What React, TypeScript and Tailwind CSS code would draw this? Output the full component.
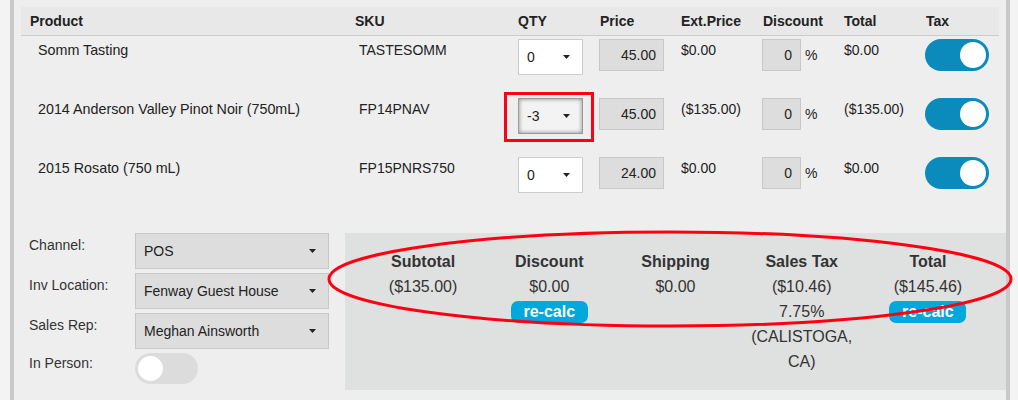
import React from 'react';

interface Line {
  name: string;
  sku: string;
  qty: string;
  price: string;
  ext: string;
  discount: string;
  total: string;
  focused?: boolean;
}

const lines: Line[] = [
  { name: 'Somm Tasting', sku: 'TASTESOMM', qty: '0', price: '45.00', ext: '$0.00', discount: '0', total: '$0.00' },
  { name: '2014 Anderson Valley Pinot Noir (750mL)', sku: 'FP14PNAV', qty: '-3', price: '45.00', ext: '($135.00)', discount: '0', total: '($135.00)', focused: true },
  { name: '2015 Rosato (750 mL)', sku: 'FP15PNRS750', qty: '0', price: '24.00', ext: '$0.00', discount: '0', total: '$0.00' },
];

const cols = 'grid grid-cols-[324px_163px_82px_81px_82px_81px_82px_83px]';

function Caret() {
  return (
    <svg width="7" height="4" viewBox="0 0 7 4" className="shrink-0">
      <path d="M0 0 L7 0 L3.5 4 Z" fill="#222" />
    </svg>
  );
}

function Toggle({ on }: { on: boolean }) {
  return (
    <div
      className={
        on
          ? 'w-[64px] h-[32px] rounded-full bg-[#0a8bbc] flex items-center justify-end px-[3px]'
          : 'w-[63px] h-[31px] rounded-full bg-[#dcdcdc] flex items-center justify-start px-[3px]'
      }
    >
      <div className={on ? 'w-[26px] h-[26px] rounded-full bg-white' : 'w-[25px] h-[25px] rounded-full bg-white'} />
    </div>
  );
}

function FormSelect({ value }: { value: string }) {
  return (
    <div className="w-[194px] h-[36px] bg-[#dddddd] border border-[#c8c8c8] flex items-center justify-between pl-[8px] pr-[12px] text-[14px] text-[#222]">
      <span>{value}</span>
      <Caret />
    </div>
  );
}

export default function App() {
  const summary = [
    { label: 'Subtotal', value: '($135.00)' },
    { label: 'Discount', value: '$0.00', recalc: true },
    { label: 'Shipping', value: '$0.00' },
    { label: 'Sales Tax', value: '($10.46)', extra: ['7.75%', '(CALISTOGA,', 'CA)'] },
    { label: 'Total', value: '($145.46)', recalc: true },
  ];

  return (
    <div className="relative w-[1018px] h-[400px] overflow-hidden bg-[#f3f3f3] pl-[10px] font-['Liberation_Sans',Arial,sans-serif] text-[#222]">
      <div className="w-[1000px] h-full border-l-4 border-r-4 border-[#c9c9c9] bg-[#eeeeee] pt-[7px]">
        {/* line items */}
        <div className="mx-[7px]">
          <div className={`${cols} h-[29px] bg-[#e8e8e8] border-b border-[#cccccc] items-center text-[14px] font-bold`}>
            <div className="pl-[9px]">Product</div>
            <div className="pl-[10px]">SKU</div>
            <div className="pl-[10px]">QTY</div>
            <div className="pl-[10px]">Price</div>
            <div className="pl-[10px]">Ext.Price</div>
            <div className="pl-[10px]">Discount</div>
            <div className="pl-[10px]">Total</div>
            <div className="pl-[10px]">Tax</div>
          </div>
          {lines.map((l) => (
            <div key={l.sku} className={`${cols} h-[59px] items-start pt-[3px] text-[14px] leading-[20px]`}>
              <div className="pl-[17px] pt-[1px] text-[14.3px]">{l.name}</div>
              <div className="pl-[14px] pt-[1px]">{l.sku}</div>
              <div className="pl-[10px] relative">
                <div
                  className={
                    l.focused
                      ? 'w-[65px] h-[36px] bg-[#f3f3f3] border border-[#9a9a9a] shadow-[inset_0_0_4px_rgba(0,0,0,0.45)] flex items-center justify-between pl-[8px] pr-[12px]'
                      : 'w-[65px] h-[36px] bg-white border border-[#cccccc] flex items-center justify-between pl-[8px] pr-[12px]'
                  }
                >
                  <span>{l.qty}</span>
                  <Caret />
                </div>
                {l.focused && (
                  <div className="absolute left-[-4px] top-[-6px] w-[90px] h-[50px] border-[3px] border-[#ff0012] pointer-events-none" />
                )}
              </div>
              <div className="pl-[9px]">
                <div className="w-[65px] h-[32px] bg-[#dddddd] border border-[#c8c8c8] flex items-center justify-end pr-[7px]">
                  {l.price}
                </div>
              </div>
              <div className="pl-[10px] pt-[1px]">{l.ext}</div>
              <div className="pl-[9px] flex items-center gap-[4px]">
                <div className="w-[39px] h-[32px] bg-[#dddddd] border border-[#c8c8c8] flex items-center justify-end pr-[8px]">
                  {l.discount}
                </div>
                <span>%</span>
              </div>
              <div className="pl-[10px] pt-[1px]">{l.total}</div>
              <div className="pl-[9px]">
                <Toggle on />
              </div>
            </div>
          ))}
        </div>

        {/* order details + totals */}
        <div className="ml-[7px] mt-[20px] flex items-start">
          <div className="w-[324px] pl-[8px] flex flex-col gap-[4px] text-[14px] text-[#333]">
            {[
              ['Channel:', 'POS'],
              ['Inv Location:', 'Fenway Guest House'],
              ['Sales Rep:', 'Meghan Ainsworth'],
            ].map(([label, value]) => (
              <div key={label} className="flex items-start">
                <div className="w-[106px] pt-[2px]">{label}</div>
                <FormSelect value={value} />
              </div>
            ))}
            <div className="flex items-start">
              <div className="w-[106px]">In Person:</div>
              <Toggle on={false} />
            </div>
          </div>
          <div className="w-[661px] h-[157px] bg-[#dfe0e0] px-[15px] pt-[16px] grid grid-cols-5 text-[16px] leading-[25px] text-[#333] text-center">
            {summary.map((s) => (
              <div key={s.label} className="flex flex-col items-center">
                <div className="font-bold">{s.label}</div>
                <div>{s.value}</div>
                {s.recalc && (
                  <div className="mt-[2px] w-[77px] h-[22px] rounded-[7px] bg-[#00a8dc] text-white font-bold leading-[22px]">
                    re-calc
                  </div>
                )}
                {s.extra && s.extra.map((e) => <div key={e}>{e}</div>)}
              </div>
            ))}
          </div>
        </div>
      </div>

      {/* annotation ellipse */}
      <svg className="absolute left-0 top-0 pointer-events-none" width="1018" height="400" viewBox="0 0 1018 400">
        <ellipse cx="670" cy="279" rx="341" ry="47" fill="none" stroke="#ff0010" strokeWidth="3" />
      </svg>
    </div>
  );
}
